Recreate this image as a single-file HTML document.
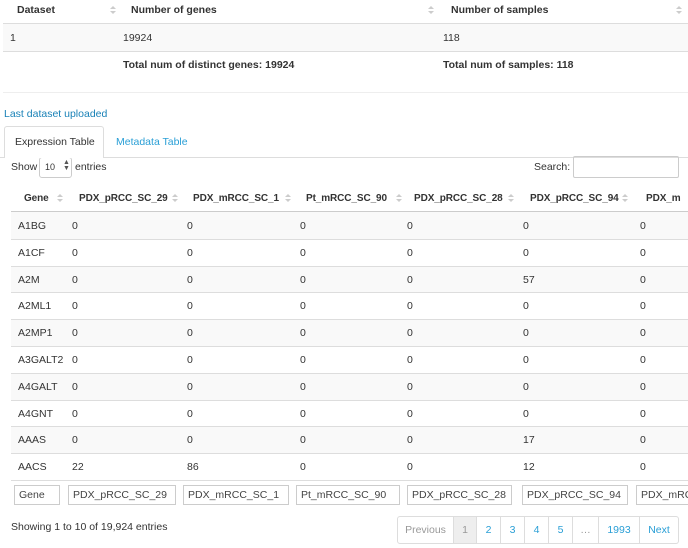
<!DOCTYPE html>
<html><head><style>
*{margin:0;padding:0;box-sizing:border-box}
body{width:688px;height:548px;overflow:hidden;background:#fff;font-family:"Liberation Sans",sans-serif;font-size:10.5px;color:#333;position:relative}
.a{position:absolute;white-space:nowrap}
.b{font-weight:bold}
.h{font-weight:bold;font-size:10px;letter-spacing:-0.1px}
.arr{position:absolute;width:6px;height:10px}
.arr:before{content:"";position:absolute;left:0;top:0;border:3px solid transparent;border-bottom:3.5px solid #ccc;border-top:0}
.arr:after{content:"";position:absolute;left:0;top:5px;border:3px solid transparent;border-top:3.5px solid #ccc;border-bottom:0}
.row{position:absolute;left:11px;width:677px;height:27px;border-top:1px solid #ddd}
.inp{position:absolute;top:485px;height:20px;border:1px solid #ccc;font-size:10.5px;padding:3px 4px;color:#444}
.pg{position:absolute;top:516px;height:28px;border:1px solid #ddd;border-left:none;color:#2a9fd6;text-align:center;line-height:26px}
</style></head><body>
<!-- top table -->
<div class="a b" style="left:17px;top:4px">Dataset</div><div class="arr" style="left:110px;top:6px"></div>
<div class="a b" style="left:131px;top:4px">Number of genes</div><div class="arr" style="left:428px;top:6px"></div>
<div class="a b" style="left:451px;top:4px">Number of samples</div><div class="arr" style="left:676px;top:6px"></div>
<div style="position:absolute;left:3px;top:23px;width:685px;height:29px;background:#f9f9f9;border-top:1px solid #ddd;border-bottom:1px solid #ddd"></div>
<div class="a" style="left:10px;top:32px">1</div>
<div class="a" style="left:123px;top:32px">19924</div>
<div class="a" style="left:443px;top:32px">118</div>
<div class="a b" style="left:123px;top:59px">Total num of distinct genes: 19924</div>
<div class="a b" style="left:443px;top:59px">Total num of samples: 118</div>
<div style="position:absolute;left:3px;top:92px;width:685px;border-top:1px solid #eee"></div>
<div class="a" style="left:4px;top:108px;color:#1a82b7">Last dataset uploaded</div>
<!-- tabs -->
<div style="position:absolute;left:4px;top:126px;width:100px;height:32px;border:1px solid #ddd;border-bottom:none;border-radius:3px 3px 0 0;background:#fff;z-index:2"></div>
<div style="position:absolute;left:0;top:157px;width:688px;border-top:1px solid #ddd"></div>
<div class="a" style="left:15px;top:136px;z-index:3">Expression Table</div>
<div class="a" style="left:116px;top:136px;color:#2a9fd6">Metadata Table</div>
<div class="a" style="left:11px;top:161px">Show</div>
<div style="position:absolute;left:39px;top:157px;width:33px;height:21px;border:1px solid #ccc;border-radius:3px"></div>
<div class="a" style="left:45px;top:162px;font-size:9px">10</div>
<div class="a" style="left:63px;top:160px;font-size:7px;line-height:6px;color:#555">▲<br>▼</div>
<div class="a" style="left:75px;top:161px">entries</div>
<div class="a" style="left:534px;top:161px">Search:</div>
<div style="position:absolute;left:573px;top:156px;width:106px;height:22px;border:1px solid #ccc;border-radius:2px"></div>
<!-- main header -->
<div class="a h" style="left:24px;top:193px">Gene</div><div class="arr" style="left:57px;top:194px"></div>
<div class="a h" style="left:79px;top:193px">PDX_pRCC_SC_29</div><div class="arr" style="left:172px;top:194px"></div>
<div class="a h" style="left:193px;top:193px">PDX_mRCC_SC_1</div><div class="arr" style="left:285px;top:194px"></div>
<div class="a h" style="left:306px;top:193px">Pt_mRCC_SC_90</div><div class="arr" style="left:396px;top:194px"></div>
<div class="a h" style="left:414px;top:193px">PDX_pRCC_SC_28</div><div class="arr" style="left:508px;top:194px"></div>
<div class="a h" style="left:530px;top:193px">PDX_pRCC_SC_94</div><div class="arr" style="left:622px;top:194px"></div>
<div class="a h" style="left:646px;top:193px">PDX_m</div>
<div style="position:absolute;left:11px;top:211px;width:677px;border-top:1px solid #ccc"></div>
<div id="rows"></div>
<div style="position:absolute;left:11px;top:480px;width:677px;border-top:1px solid #ddd"></div>
<div class="inp" style="left:14px;width:46px">Gene</div>
<div class="inp" style="left:68px;width:108px">PDX_pRCC_SC_29</div>
<div class="inp" style="left:183px;width:106px">PDX_mRCC_SC_1</div>
<div class="inp" style="left:296px;width:104px">Pt_mRCC_SC_90</div>
<div class="inp" style="left:407px;width:105px">PDX_pRCC_SC_28</div>
<div class="inp" style="left:522px;width:106px">PDX_pRCC_SC_94</div>
<div class="inp" style="left:636px;width:60px">PDX_mRCC</div>
<div class="a" style="left:11px;top:521px">Showing 1 to 10 of 19,924 entries</div>
<div class="pg" style="left:397px;width:57px;border-left:1px solid #ddd;color:#999;border-radius:3px 0 0 3px">Previous</div>
<div class="pg" style="left:454px;width:23px;background:#eee;color:#999">1</div>
<div class="pg" style="left:477px;width:24px">2</div>
<div class="pg" style="left:501px;width:24px">3</div>
<div class="pg" style="left:525px;width:24px">4</div>
<div class="pg" style="left:549px;width:24px">5</div>
<div class="pg" style="left:573px;width:26px;color:#999">…</div>
<div class="pg" style="left:599px;width:41px">1993</div>
<div class="pg" style="left:640px;width:39px;border-radius:0 3px 3px 0">Next</div>
<script>
var d=[["A1BG","0","0","0","0","0","0"],["A1CF","0","0","0","0","0","0"],["A2M","0","0","0","0","57","0"],["A2ML1","0","0","0","0","0","0"],["A2MP1","0","0","0","0","0","0"],["A3GALT2","0","0","0","0","0","0"],["A4GALT","0","0","0","0","0","0"],["A4GNT","0","0","0","0","0","0"],["AAAS","0","0","0","0","17","0"],["AACS","22","86","0","0","12","0"]];
var xs=[18,72,187,300,407,523,640],h="";
d.forEach(function(r,i){var t=212+i*26.8;
h+='<div class="row" style="top:'+t+'px;'+(i%2==0?'background:#f9f9f9;':'')+(i==0?'border-top:none;':'')+'"></div>';
r.forEach(function(c,j){h+='<div class="a" style="left:'+xs[j]+'px;top:'+(t+8)+'px">'+c+'</div>';});});
document.getElementById("rows").innerHTML=h;
</script>
</body></html>
